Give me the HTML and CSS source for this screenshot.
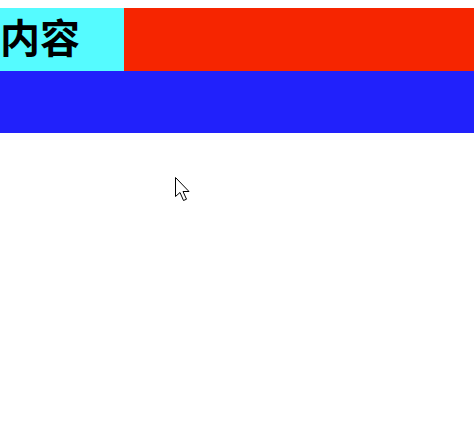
FILE: index.html
```html
<!DOCTYPE html>
<html lang="zh">
<head>
<meta charset="utf-8">
<link rel="stylesheet" href="styles.css">
</head>
<body>
<div class="page">
  <div class="top">
    <div class="label">内容</div>
    <div class="fill"></div>
  </div>
  <div class="band"></div>
</div>
<svg class="cursor" width="17" height="27" viewBox="0 0 17 27">
  <path d="M1.5 1.5 L1.5 20.5 L6 16.5 L9.5 24.5 L12.5 23.2 L9 15.5 L15 15.5 Z" fill="#fff" stroke="#000" stroke-width="1" stroke-linejoin="miter"/>
</svg>
</body>
</html>
```
FILE: styles.css
```css
html, body {
  margin: 0;
  padding: 0;
  background: #fff;
}
.page {
  padding-top: 8px;
}
.top {
  display: flex;
  height: 63px;
}
.label {
  width: 124px;
  background: #55fbff;
  font-family: "Noto Sans CJK SC", sans-serif;
  font-weight: 700;
  font-size: 40px;
  line-height: 57px;
  color: #000;
  white-space: nowrap;
}
.fill {
  flex: 1;
  background: #f62500;
}
.band {
  height: 62px;
  background: #2121fb;
}
.cursor {
  position: absolute;
  left: 174px;
  top: 176px;
}
```
